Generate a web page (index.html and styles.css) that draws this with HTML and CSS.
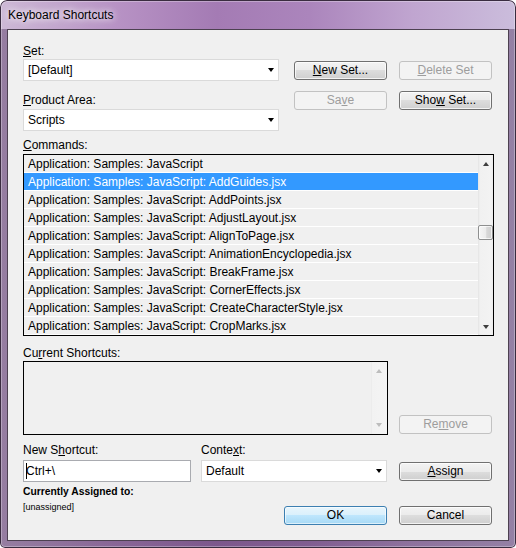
FILE: index.html
```html
<!DOCTYPE html>
<html>
<head>
<meta charset="utf-8">
<link rel="stylesheet" href="styles.css">
</head>
<body>
<div class="window">
  <div class="titlebar"><span class="title">Keyboard Shortcuts</span></div>
  <div class="client">
    <div class="top">
      <div class="leftcol">
        <div class="lbl"><u>S</u>et:</div>
        <div class="combo"><span>[Default]</span><span class="arrow"></span></div>
        <div class="lbl lbl-pa"><u>P</u>roduct Area:</div>
        <div class="combo combo-pa"><span>Scripts</span><span class="arrow"></span></div>
      </div>
      <div class="btngrid">
        <div class="btn"><u>N</u>ew Set...</div>
        <div class="btn dis"><u>D</u>elete Set</div>
        <div class="btn dis">Sa<u>v</u>e</div>
        <div class="btn">Sho<u>w</u> Set...</div>
      </div>
    </div>

    <div class="lbl lbl-cmd"><u>C</u>ommands:</div>
    <div class="list">
      <div class="rows">
        <div class="row">Application: Samples: JavaScript</div>
        <div class="row sel">Application: Samples: JavaScript: AddGuides.jsx</div>
        <div class="row">Application: Samples: JavaScript: AddPoints.jsx</div>
        <div class="row">Application: Samples: JavaScript: AdjustLayout.jsx</div>
        <div class="row">Application: Samples: JavaScript: AlignToPage.jsx</div>
        <div class="row">Application: Samples: JavaScript: AnimationEncyclopedia.jsx</div>
        <div class="row">Application: Samples: JavaScript: BreakFrame.jsx</div>
        <div class="row">Application: Samples: JavaScript: CornerEffects.jsx</div>
        <div class="row">Application: Samples: JavaScript: CreateCharacterStyle.jsx</div>
        <div class="row">Application: Samples: JavaScript: CropMarks.jsx</div>
      </div>
      <div class="vscroll">
        <div class="sb-btn"><span class="tri-up"></span></div>
        <div class="sb-track"><div class="thumb"></div></div>
        <div class="sb-btn"><span class="tri-down"></span></div>
      </div>
    </div>

    <div class="lbl lbl-cur">Cu<u>r</u>rent Shortcuts:</div>
    <div class="currow">
      <div class="curbox">
        <div class="curarea"></div>
        <div class="vscroll vscroll-dis">
          <div class="sb-btn"><span class="tri-up"></span></div>
          <div class="sb-track"></div>
          <div class="sb-btn"><span class="tri-down"></span></div>
        </div>
      </div>
      <div class="btn dis btn-remove">Re<u>m</u>ove</div>
    </div>

    <div class="fields">
      <div class="field f-new">
        <div class="lbl">New S<u>h</u>ortcut:</div>
        <div class="textbox"><span class="caret"></span>Ctrl+\</div>
      </div>
      <div class="field f-ctx">
        <div class="lbl">Conte<u>x</u>t:</div>
        <div class="combo combo-ctx"><span>Default</span><span class="arrow"></span></div>
      </div>
      <div class="field f-assign">
        <div class="btn"><u>A</u>ssign</div>
      </div>
    </div>

    <div class="footer">
      <div class="assigned">
        <div class="as-title">Currently Assigned to:</div>
        <div class="as-val">[unassigned]</div>
      </div>
      <div class="btn btn-ok">OK</div>
      <div class="btn btn-cancel">Cancel</div>
    </div>
  </div>
</div>
</body>
</html>
```
FILE: styles.css
```css
* { box-sizing: border-box; }
html, body { margin: 0; padding: 0; }
body {
  width: 516px;
  height: 548px;
  overflow: hidden;
  background: #ffffff;
  font-family: "Liberation Sans", Arial, sans-serif;
  font-size: 12px;
  color: #000;
}
u { text-decoration: underline; text-underline-offset: 1px; }

.window {
  width: 516px;
  height: 548px;
  padding: 0 7px 7px 7px;
  border-radius: 7px 7px 5px 5px;
  display: flex;
  flex-direction: column;
  background:
    linear-gradient(to bottom, rgba(255,255,255,0) 0, rgba(255,255,255,0) 29px, rgba(60,30,75,0.38) 29px),
    linear-gradient(to right, #cdb9d6 0%, #b893c5 22%, #a47bb4 42%, #ab85bc 60%, #c0a5d0 80%, #cbbddc 100%);
  box-shadow: inset 0 0 0 1px #3a2c40, inset 0 0 0 2px rgba(255,255,255,0.3);
}
.titlebar {
  height: 29px;
  flex: none;
  padding: 8px 0 0 1px;
  line-height: 14px;
  font-size: 12px;
}
.title {
  color: #000;
  text-shadow: 0 0 6px rgba(255,255,255,0.95), 0 0 10px rgba(255,255,255,0.8);
}
.client {
  flex: 1;
  border: 1px solid #4d4151;
  background: #f0f0f0;
  padding: 14px 0 0 15px;
}

.lbl {
  height: 14px;
  line-height: 14px;
  white-space: nowrap;
}

.top { display: flex; }
.leftcol { width: 256px; display: flex; flex-direction: column; }
.combo {
  height: 22px;
  margin-top: 1px;
  border: 1px solid #dadada;
  background: #fff;
  line-height: 20px;
  padding-left: 4px;
  display: flex;
  justify-content: space-between;
  align-items: center;
}
.arrow {
  width: 0;
  height: 0;
  border-left: 3.5px solid transparent;
  border-right: 3.5px solid transparent;
  border-top: 4px solid #000;
  margin-right: 4px;
}
.lbl-pa { margin-top: 12px; }
.combo-pa { margin-top: 2px; }

.btngrid {
  margin-left: 15px;
  padding-top: 17px;
  display: grid;
  grid-template-columns: 93px 93px;
  grid-auto-rows: 19px;
  column-gap: 12px;
  row-gap: 11px;
}
.btn {
  width: 93px;
  height: 19px;
  border: 1px solid #707070;
  border-radius: 3px;
  background: linear-gradient(#f3f3f3, #ebebeb 50%, #dddddd 50%, #cfcfcf);
  box-shadow: inset 0 0 0 1px rgba(255,255,255,0.75);
  line-height: 17px;
  text-align: center;
  white-space: nowrap;
}
.btn.dis {
  border-color: #c2c2c2;
  background: #f3f3f3;
  box-shadow: none;
  color: #9d9d9d;
}

.lbl-cmd { margin-top: 7px; }
.list {
  margin-top: 2px;
  width: 471px;
  height: 182px;
  border: 1px solid #000;
  display: flex;
}
.rows { flex: 1; overflow: hidden; }
.row {
  height: 18px;
  line-height: 17px;
  padding-left: 4px;
  padding-top: 1px;
  border-bottom: 1px solid #ffffff;
  background: #f0f0f0;
  white-space: nowrap;
}
.row.sel { background: #3399ff; color: #fff; }

.vscroll {
  width: 15px;
  flex: none;
  display: flex;
  flex-direction: column;
  background: linear-gradient(to right, #e4e4e4, #f1f1f1 2px, #f3f3f3 13px, #ececec);
}
.sb-btn {
  height: 17px;
  flex: none;
  display: flex;
  align-items: center;
  justify-content: center;
}
.sb-track { flex: 1; display: flex; flex-direction: column; }
.tri-up {
  width: 0; height: 0;
  border-left: 3.5px solid transparent;
  border-right: 3.5px solid transparent;
  border-bottom: 4px solid #3e3e3e;
}
.tri-down {
  width: 0; height: 0;
  border-left: 3.5px solid transparent;
  border-right: 3.5px solid transparent;
  border-top: 4px solid #3e3e3e;
}
.thumb {
  margin-top: 53px;
  height: 15px;
  border: 1px solid #8e8f8f;
  border-radius: 2px;
  background: linear-gradient(to right, #f6f6f6, #ececec 50%, #d8d8d8 60%, #cfcfcf);
  box-shadow: inset 0 0 0 1px rgba(255,255,255,0.7);
}

.lbl-cur { margin-top: 10px; }
.currow { display: flex; align-items: flex-end; margin-top: 1px; }
.curbox {
  width: 365px;
  height: 74px;
  border: 1px solid #000;
  background: #f0f0f0;
  display: flex;
}
.curarea { flex: 1; }
.vscroll-dis {
  width: 16px;
  background: linear-gradient(to right, #e6e6e6, #f2f2f2 1px, #f4f4f4);
}
.vscroll-dis .sb-btn { height: 18px; }
.vscroll-dis .tri-up { border-bottom-color: #bdbdbd; }
.vscroll-dis .tri-down { border-top-color: #bdbdbd; }
.btn-remove { margin-left: 11px; margin-bottom: 1px; }

.fields { display: flex; margin-top: 8px; }
.field { display: flex; flex-direction: column; }
.f-new { width: 168px; margin-right: 10px; }
.f-ctx { width: 186px; margin-right: 12px; }
.f-assign { padding-top: 19px; }
.textbox {
  margin-top: 3px;
  height: 22px;
  border: 1px solid #a9abb0;
  background: #fff;
  padding-left: 2px;
  line-height: 20px;
  white-space: nowrap;
  display: flex;
  align-items: center;
}
.caret {
  width: 1px;
  height: 16px;
  background: #000;
  margin-right: -1px;
  flex: none;
}
.combo-ctx { margin-top: 3px; }

.footer { display: flex; margin-top: 4px; }
.assigned { width: 261px; }
.as-title {
  font-size: 10.3px;
  font-weight: bold;
  line-height: 12px;
  height: 12px;
  white-space: nowrap;
}
.as-val {
  margin-top: 4px;
  font-size: 9px;
  line-height: 11px;
  white-space: nowrap;
}
.btn-ok {
  width: 103px;
  margin-top: 20px;
  border-color: #3c7fb1;
  background: linear-gradient(#e8f5fc, #d9f0fc 50%, #bee6fd 50%, #a7d9f5);
  box-shadow: inset 0 0 0 1px rgba(255,255,255,0.6);
}
.btn-cancel { margin-top: 20px; margin-left: 12px; }
```
